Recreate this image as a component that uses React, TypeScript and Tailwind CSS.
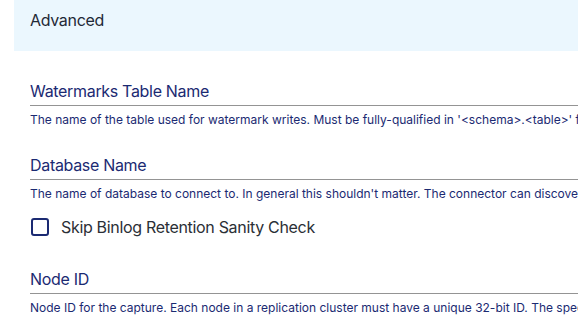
const fields = [
  {
    label: "Watermarks Table Name",
    help: "The name of the table used for watermark writes. Must be fully-qualified in '<schema>.<table>' form.",
  },
  {
    label: "Database Name",
    help: "The name of database to connect to. In general this shouldn't matter. The connector can discover and capture from all databases it's authorized to access.",
  },
];

function Field({ label, help }: { label: string; help: string }) {
  return (
    <div className="flex flex-col">
      <label className="h-6 text-[16px] leading-6 tracking-[-0.02em] text-[#1b2a72]">{label}</label>
      <div className="mt-[2px] h-px w-full bg-[#949494]" />
      <p className="mt-[5px] whitespace-nowrap text-[12px] leading-[18px] text-[#1b2a72]">{help}</p>
    </div>
  );
}

export default function App() {
  return (
    <div className="h-[324px] w-[578px] overflow-hidden bg-white font-['Inter',sans-serif]">
      <div className="w-[900px] pl-[14px]">
        <div className="bg-[#ebf7fe] px-4 pt-2 pb-[19px]">
          <span className="text-[16px] leading-6 tracking-[-0.02em] text-[#1f2937]">Advanced</span>
        </div>
        <div className="flex flex-col px-4 pt-[28px]">
          <Field {...fields[0]} />
          <div className="mt-[24px]">
            <Field {...fields[1]} />
          </div>
          <label className="mt-[12px] flex h-6 items-center gap-[12px] pl-px">
            <span className="h-[18px] w-[18px] rounded-[3px] border-2 border-[#1b2a72] bg-white" />
            <span className="text-[16px] leading-6 tracking-[-0.02em] text-[#2b2f36]">Skip Binlog Retention Sanity Check</span>
          </label>
          <div className="mt-[28px]">
            <Field
              label="Node ID"
              help="Node ID for the capture. Each node in a replication cluster must have a unique 32-bit ID. The specific value doesn't matter so long as it is unique."
            />
          </div>
        </div>
      </div>
    </div>
  );
}
